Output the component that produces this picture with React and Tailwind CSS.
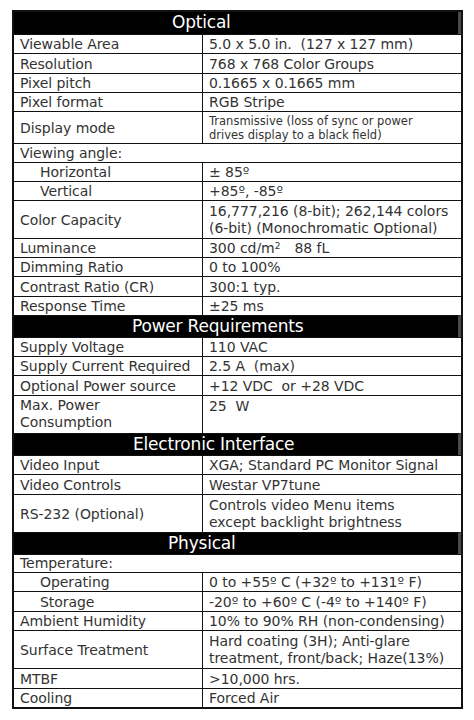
import React from "react";

const rows = [
  { h: "Optical", height: 22, pl: 158 },
  { l: "Viewable Area", r: "5.0 x 5.0 in.  (127 x 127 mm)", height: 19 },
  { l: "Resolution", r: "768 x 768 Color Groups", height: 20 },
  { l: "Pixel pitch", r: "0.1665 x 0.1665 mm", height: 19 },
  { l: "Pixel format", r: "RGB Stripe", height: 19 },
  { l: "Display mode", r: ["Transmissive (loss of sync or power", "drives display to a black field)"], height: 32, small: true },
  { full: "Viewing angle:", height: 19 },
  { l: "Horizontal", r: "± 85º", height: 19, indent: true },
  { l: "Vertical", r: "+85º, -85º", height: 19, indent: true },
  { l: "Color Capacity", r: ["16,777,216 (8-bit); 262,144 colors", "(6-bit) (Monochromatic Optional)"], height: 38 },
  { l: "Luminance", r: "lum", height: 19 },
  { l: "Dimming Ratio", r: "0 to 100%", height: 19 },
  { l: "Contrast Ratio (CR)", r: "300:1 typ.", height: 20 },
  { l: "Response Time", r: "±25 ms", height: 19 },
  { h: "Power Requirements", height: 22, pl: 118 },
  { l: "Supply Voltage", r: "110 VAC", height: 19 },
  { l: "Supply Current Required", r: "2.5 A  (max)", height: 19 },
  { l: "Optional Power source", r: "+12 VDC  or +28 VDC", height: 20 },
  { l: ["Max. Power", "Consumption"], r: "25  W", height: 38, top: true },
  { h: "Electronic Interface", height: 22, pl: 119 },
  { l: "Video Input", r: "XGA; Standard PC Monitor Signal", height: 19 },
  { l: "Video Controls", r: "Westar VP7tune", height: 20 },
  { l: "RS-232 (Optional)", r: ["Controls video Menu items", "except backlight brightness"], height: 38 },
  { h: "Physical", height: 22, pl: 154 },
  { full: "Temperature:", height: 18 },
  { l: "Operating", r: "0 to +55º C (+32º to +131º F)", height: 19, indent: true },
  { l: "Storage", r: "-20º to +60º C (-4º to +140º F)", height: 20, indent: true },
  { l: "Ambient Humidity", r: "10% to 90% RH (non-condensing)", height: 19 },
  { l: "Surface Treatment", r: ["Hard coating (3H); Anti-glare", "treatment, front/back; Haze(13%)"], height: 38 },
  { l: "MTBF", r: ">10,000 hrs.", height: 20 },
  { l: "Cooling", r: "Forced Air", height: 19 },
];

function Lines({ v }) {
  if (Array.isArray(v)) return v.map((t, i) => <div key={i} className="leading-[17px]">{t}</div>);
  if (v === "lum")
    return (
      <span>
        300 cd/m<sup className="text-[9px]">2</sup>
        <span className="ml-[14px]">88 fL</span>
      </span>
    );
  return <span className="whitespace-pre">{v}</span>;
}

export default function App() {
  return (
    <div
      className="w-[474px] h-[720px] bg-white pt-[10px] pl-[12px]"
      style={{ fontFamily: '"DejaVu Sans", Verdana, sans-serif' }}
    >
      <div className="w-[451px] border-2 border-[#111] text-[#333] text-[14px] tracking-[-0.05px]">
        {rows.map((row, i) => {
          const bt = i === 0 ? "" : "border-t-[1.5px] border-[#111]";
          if (row.h)
            return (
              <div
                key={i}
                style={{ height: row.height, paddingLeft: row.pl }}
                className={`flex items-center bg-black text-white text-[17px] tracking-[-0.2px] border-r-[3px] border-r-[#4a4a4a] ${bt}`}
              >
                {row.h}
              </div>
            );
          if (row.full)
            return (
              <div key={i} style={{ height: row.height }} className={`flex items-center pl-[6px] ${bt}`}>
                {row.full}
              </div>
            );
          return (
            <div key={i} style={{ height: row.height }} className={`flex ${bt}`}>
              <div
                className={`w-[189px] shrink-0 border-r-[1.5px] border-[#111] flex flex-col ${row.top ? "justify-start pt-[1px]" : "justify-center"} ${row.indent ? "pl-[26px]" : "pl-[6px]"} leading-[18px]`}
              >
                <Lines v={row.l} />
              </div>
              <div
                className={`flex-1 flex flex-col ${row.top ? "justify-start pt-[1px]" : "justify-center"} pl-[6px] ${row.small ? "text-[11.5px] tracking-[0px]" : "leading-[18px]"}`}
              >
                {row.small ? (
                  row.r.map((t, k) => <div key={k} className="leading-[14px]">{t}</div>)
                ) : (
                  <Lines v={row.r} />
                )}
              </div>
            </div>
          );
        })}
      </div>
    </div>
  );
}
